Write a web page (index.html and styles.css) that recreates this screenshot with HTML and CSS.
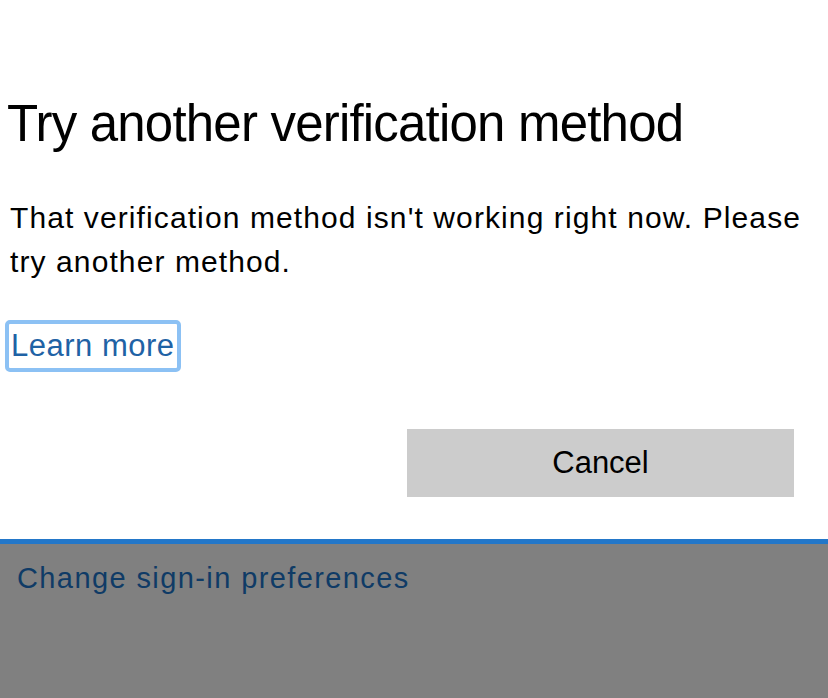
FILE: index.html
```html
<!DOCTYPE html>
<html lang="en">
<head>
    <meta charset="UTF-8">
    <meta name="viewport" content="width=device-width, initial-scale=1.0">
    <title>Try another verification method</title>
    <link rel="stylesheet" href="styles.css">
</head>
<body>
    <div class="dialog">
        <h1 class="title">Try another verification method</h1>
        <p class="message">That verification method isn't working right now. Please try another method.</p>
        <div class="link-row">
            <a href="#" class="learn-more">Learn more</a>
        </div>
        <div class="actions">
            <button class="cancel">Cancel</button>
        </div>
    </div>

    <div class="footer">
        <a href="#" class="prefs">Change sign-in preferences</a>
    </div>
</body>
</html>
```

FILE: styles.css
```css
body {
    margin: 0;
    background: #fff;
    font-family: "Liberation Sans", Arial, sans-serif;
    color: #000;
    height: 698px;
    display: flex;
    flex-direction: column;
}

.dialog {
    flex-shrink: 0;
    padding: 94px 0 0 0;
    height: 539px;
    box-sizing: border-box;
}

.title {
    margin: 0 0 0 7px;
    font-size: 51px;
    font-weight: normal;
    line-height: 60px;
    letter-spacing: -0.8px;
}

.message {
    margin: 42px 0 0 10px;
    width: 805px;
    font-size: 30px;
    line-height: 44px;
    letter-spacing: 1.1px;
}

.link-row {
    margin-top: 36px;
    padding-left: 5px;
}

.learn-more {
    display: inline-block;
    border: 4px solid #8cc1f4;
    border-radius: 5px;
    padding: 0 2px;
    line-height: 44px;
    font-size: 31px;
    letter-spacing: 0.5px;
    color: #1f62a5;
    text-decoration: none;
}

.actions {
    display: flex;
    justify-content: flex-end;
    padding-right: 34px;
    margin-top: 57px;
}

.cancel {
    width: 387px;
    height: 68px;
    border: none;
    background: #cccccc;
    font-family: "Liberation Sans", Arial, sans-serif;
    font-size: 31px;
    color: #000;
    padding: 0;
}

.footer {
    flex: 1;
    background: #808080;
    border-top: 5px solid #2377c9;
    padding: 16px 0 0 17px;
}

.prefs {
    font-size: 29px;
    line-height: 36px;
    letter-spacing: 1.4px;
    color: #0f3b66;
    text-decoration: none;
}
```
